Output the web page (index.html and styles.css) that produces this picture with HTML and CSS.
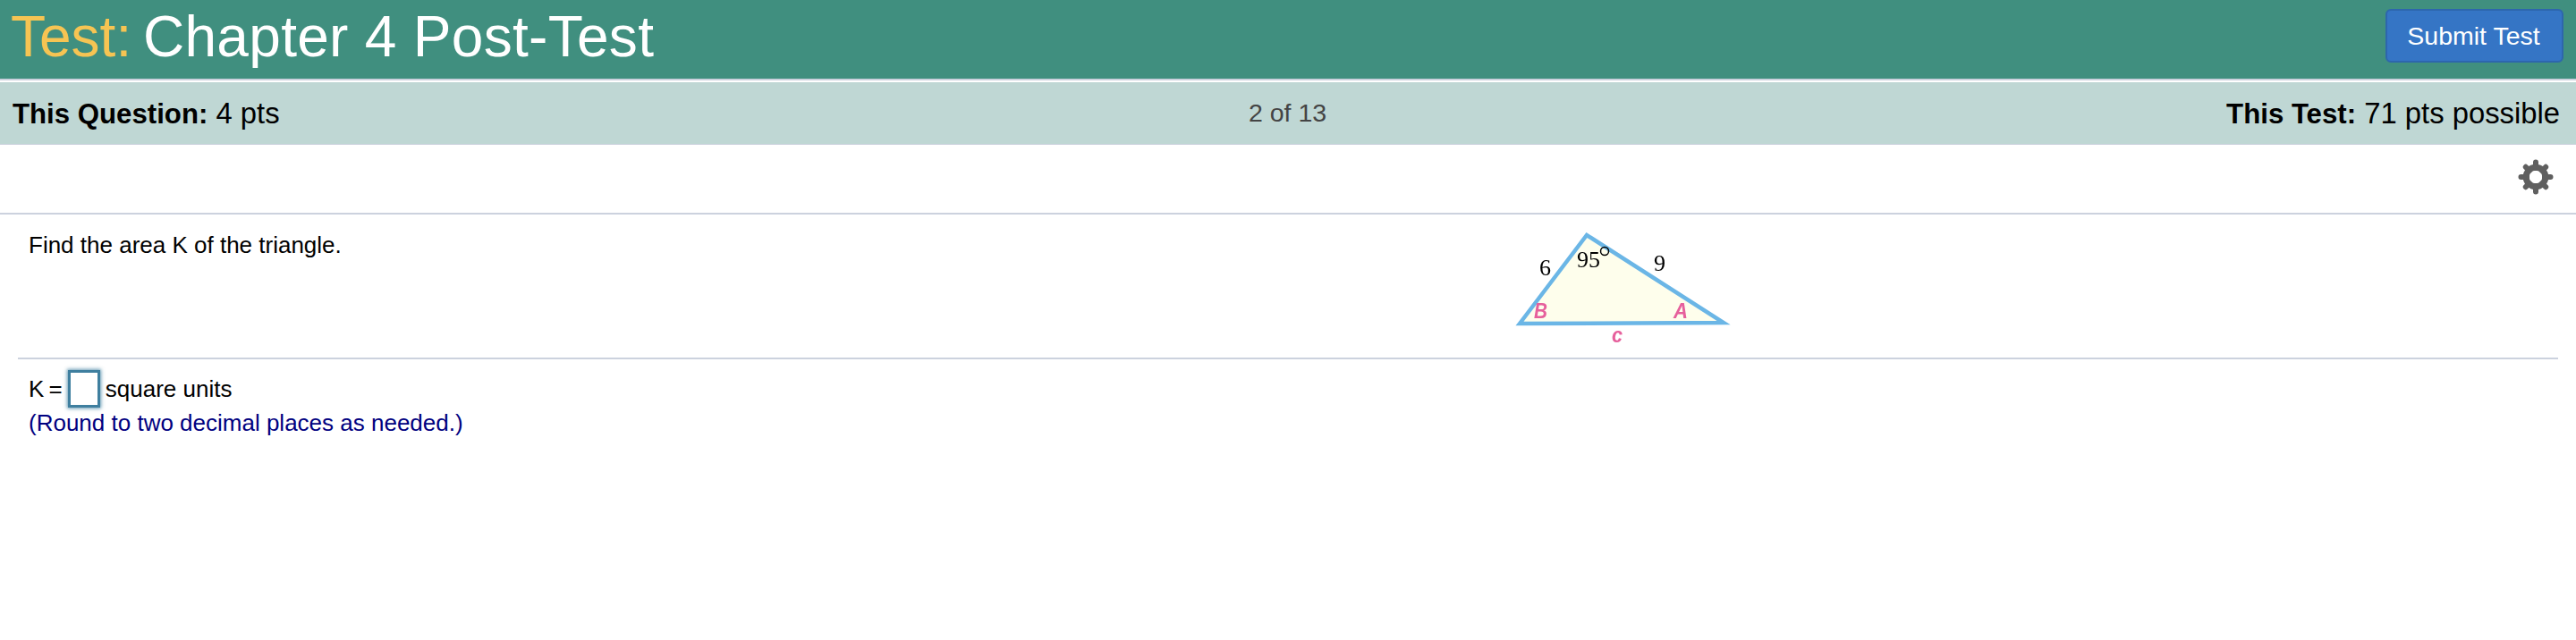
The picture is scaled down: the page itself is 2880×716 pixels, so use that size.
FILE: index.html
```html
<!DOCTYPE html>
<html lang="en">
<head>
<meta charset="utf-8">
<title>Test: Chapter 4 Post-Test</title>
<link rel="stylesheet" href="styles.css">
</head>
<body>
<header class="title-bar">
  <h1 class="title"><span class="title-label">Test:</span> <span class="title-name">Chapter 4 Post-Test</span></h1>
  <button class="submit" type="button">Submit Test</button>
</header>
<div class="info-bar">
  <div class="info-left"><b>This Question:</b> 4 pts</div>
  <div class="info-mid">2 of 13</div>
  <div class="info-right"><b>This Test:</b> 71 pts possible</div>
</div>
<div class="tools">
  <svg class="gear" viewBox="0 0 40 40" aria-label="Settings">
    <circle class="gear-ring" cx="20" cy="20" r="10.8"/>
    <path class="gear-teeth" d="M20 3.500V10M20 30V36.500M3.500 20H10M30 20H36.500M8.800 8.800L12.900 12.900M31.200 8.800L27.100 12.900M8.800 31.200L12.900 27.100M31.200 31.200L27.100 27.100"/>
  </svg>
</div>
<main class="question">
  <div class="prompt">
    <p class="prompt-text">Find the area K of the triangle.</p>
    <svg class="figure" viewBox="0 0 250 130" width="250" height="130">
      <polygon class="tri" points="8,104 83,5 236,103"/>
      <text class="num" x="30" y="50">6</text>
      <text class="num" x="72" y="41">95</text>
      <circle class="deg" cx="103" cy="23" r="4.500"/>
      <text class="num" x="158" y="45">9</text>
      <text class="pink" x="24" y="98" textLength="15" lengthAdjust="spacingAndGlyphs">B</text>
      <text class="pink" x="180" y="98" textLength="16" lengthAdjust="spacingAndGlyphs">A</text>
      <text class="pink" x="111" y="125" textLength="12" lengthAdjust="spacingAndGlyphs">c</text>
    </svg>
  </div>
  <div class="answer">
    <div class="answer-line"><span class="answer-k">K =</span><span class="field"></span><span>square units</span></div>
    <div class="hint">(Round to two decimal places as needed.)</div>
  </div>
</main>
</body>
</html>
```
FILE: styles.css
```css
* { box-sizing: border-box; }
html, body { margin: 0; padding: 0; background: #fff; }
body { font-family: "Liberation Sans", Arial, sans-serif; color: #000; }
.title-bar {
  height: 90px;
  background: #408f7f;
  border-bottom: 2px solid #ccd2de;
  display: flex;
  align-items: flex-start;
  justify-content: space-between;
  padding: 0 14px 0 12px;
}
.title { margin: 0; font-weight: 400; font-size: 64px; line-height: 82px; color: #fff; }
.title-label { color: #f6c453; margin-right: -5px; }
.title-name { letter-spacing: 0.3px; }
.submit {
  margin-top: 10px;
  width: 199px;
  height: 60px;
  background: #3575c5;
  border: 2px solid #2d66ad;
  border-radius: 6px;
  color: #fff;
  font: 400 28.500px "Liberation Sans", Arial, sans-serif;
  padding: 0 2px 0 0;
}
.info-bar {
  margin-top: 2px;
  height: 70px;
  background: #bfd7d4;
  border-bottom: 1px solid #ccd2de;
  display: grid;
  grid-template-columns: 1fr auto 1fr;
  align-items: center;
  padding: 0 18px 0 14px;
  font-size: 32.800px;
}
.info-bar b { font-size: 31.200px; }
.info-mid { font-size: 28.500px; color: #444; margin-left: 3px; }
.info-right { text-align: right; }
.tools {
  height: 78px;
  border-bottom: 2px solid #ccd2de;
  display: flex;
  justify-content: flex-end;
  align-items: center;
  padding-right: 25px;
  padding-bottom: 4px;
}
.gear { width: 40px; height: 40px; filter: blur(0.4px); }
.gear-ring { fill: none; stroke: #5f5f5f; stroke-width: 7; }
.gear-teeth { fill: none; stroke: #5f5f5f; stroke-width: 6; stroke-linecap: round; }
.question { padding: 0 20px; }
.prompt {
  height: 162px;
  border-bottom: 2px solid #ccd2de;
  display: flex;
  align-items: flex-start;
}
.prompt-text { margin: 17px 0 0 12px; font-size: 26px; line-height: 34px; width: 1659px; }
.figure { margin-top: 18px; overflow: visible; filter: blur(0.4px); }
.tri { fill: #fefeec; stroke: #6bb6e6; stroke-width: 4.500; }
.num { font: 26px "Liberation Serif", serif; fill: #000; }
.deg { fill: none; stroke: #000; stroke-width: 1.500; }
.pink { font: italic 700 24px "Liberation Sans", Arial, sans-serif; fill: #e6609c; }
.answer { padding: 10px 0 0 12px; font-size: 26px; }
.answer-line { display: flex; align-items: center; gap: 6px; height: 46px; }
.answer-k { word-spacing: -2px; }
.field {
  display: block;
  width: 36px;
  height: 42px;
  background: #fff;
  border: 3px solid #3f7f9f;
  box-shadow: 0 0 4px 1px rgba(63, 127, 159, 0.8);
}
.hint { color: #000080; line-height: 30px; }
```
